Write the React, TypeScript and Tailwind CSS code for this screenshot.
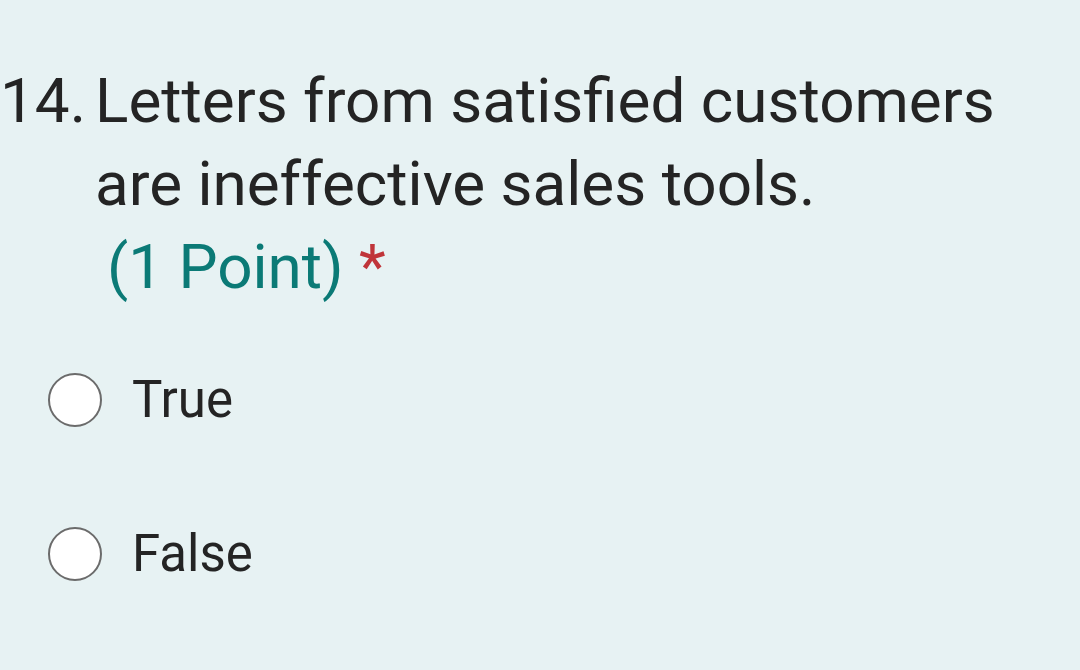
const options = ['True', 'False']

function Radio() {
  return <span className="block h-[54px] w-[54px] shrink-0 rounded-full border-[2.5px] border-[#6b6b6b] bg-white" />
}

export default function App() {
  return (
    <div
      className="min-h-screen w-full bg-[#e7f2f3] pt-[59px] text-[#242424]"
      style={{ fontFamily: 'Roboto, "Noto Sans", sans-serif' }}
    >
      <div className="flex text-[62px] leading-[83px]">
        <span className="w-[95px] shrink-0">14.</span>
        <div>
          <p>Letters from satisfied customers</p>
          <p>are ineffective sales tools.</p>
          <p className="ml-[12px] text-[#0b7a76]">
            (1 Point) <span className="text-[#c0353a]">*</span>
          </p>
        </div>
      </div>

      <div className="mt-[62px] flex flex-col gap-[94px] pl-[48px]">
        {options.map((o) => (
          <label key={o} className="flex h-[60px] items-center gap-[30px] text-[51px] leading-[60px]">
            <Radio />
            <span>{o}</span>
          </label>
        ))}
      </div>
    </div>
  )
}
